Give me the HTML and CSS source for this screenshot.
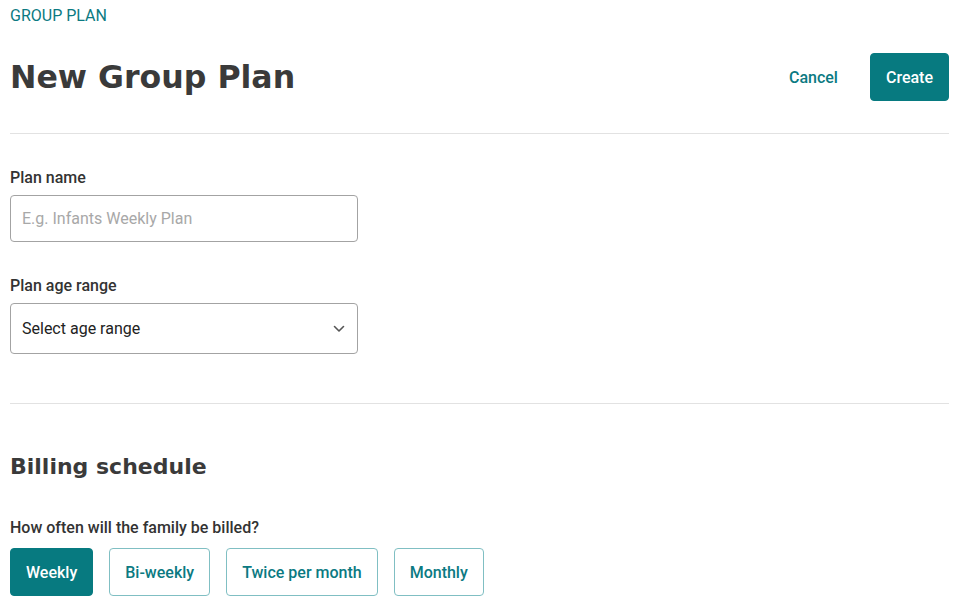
FILE: index.html
```html
<!DOCTYPE html>
<html lang="en">
<head>
<meta charset="utf-8">
<title>New Group Plan</title>
<link rel="stylesheet" href="styles.css">
</head>
<body>
<div class="page">
  <div class="eyebrow">GROUP PLAN</div>
  <div class="header">
    <h1 class="title">New Group Plan</h1>
    <div class="actions">
      <button class="btn btn-link">Cancel</button>
      <button class="btn btn-primary">Create</button>
    </div>
  </div>
  <hr class="divider">
  <div class="field field-first">
    <label class="label">Plan name</label>
    <div class="input"><span class="placeholder">E.g. Infants Weekly Plan</span></div>
  </div>
  <div class="field field-second">
    <label class="label">Plan age range</label>
    <div class="select">
      <span>Select age range</span>
      <svg class="chev" width="12" height="8" viewBox="0 0 12 8"><path d="M1.5 1.5 L6 6 L10.5 1.5" fill="none" stroke="#555" stroke-width="1.6" stroke-linecap="round" stroke-linejoin="round"/></svg>
    </div>
  </div>
  <hr class="divider divider-2">
  <h2 class="section-title">Billing schedule</h2>
  <div class="question">How often will the family be billed?</div>
  <div class="options">
    <button class="btn btn-primary">Weekly</button>
    <button class="btn btn-outline">Bi-weekly</button>
    <button class="btn btn-outline">Twice per month</button>
    <button class="btn btn-outline">Monthly</button>
  </div>
</div>
</body>
</html>
```

FILE: styles.css
```css
* { box-sizing: border-box; }
body {
  margin: 0;
  background: #fff;
  font-family: Roboto, "Liberation Sans", sans-serif;
  color: #333;
}
.page { padding: 0 10px; }
.eyebrow {
  margin-top: 6px;
  font-size: 16px;
  line-height: 20px;
  color: #0b7a82;
}
.header {
  margin-top: 27px;
  height: 48px;
  display: flex;
  align-items: center;
  justify-content: space-between;
}
.title {
  margin: 0;
  font-family: "DejaVu Sans", sans-serif;
  font-weight: 700;
  font-size: 31.6px;
  line-height: 48px;
  color: #3a3a3a;
}
.actions { display: flex; gap: 16px; align-items: center; }
.btn {
  font-family: Roboto, sans-serif;
  font-weight: 500;
  font-size: 16px;
  height: 48px;
  padding: 0 15px;
  border-radius: 4px;
  border: 1px solid transparent;
  background: none;
  cursor: pointer;
}
.btn-link { color: #0b7a82; }
.btn-primary { background: #077a80; color: #fff; border-color: #077a80; }
.btn-outline { background: #fff; color: #0b7a82; border-color: #80bfc3; }
.divider {
  margin: 32px 0 0;
  border: 0;
  border-top: 1px solid #e2e2e2;
}
.divider-2 { margin-top: 49px; }
.field { display: flex; flex-direction: column; width: 348px; }
.field-first { margin-top: 34px; }
.field-second { margin-top: 34px; }
.label {
  font-size: 16px;
  font-weight: 500;
  line-height: 20px;
  color: #333;
  margin-bottom: 7px;
}
.input, .select {
  border: 1px solid #a3a3a3;
  border-radius: 4px;
  padding: 0 11px;
  display: flex;
  align-items: center;
  font-size: 16px;
}
.input { height: 47px; }
.placeholder { color: #a8a8a8; }
.select { height: 51px; justify-content: space-between; color: #222; padding-right: 12px; }
.section-title {
  margin: 47px 0 0;
  font-family: "DejaVu Sans", sans-serif;
  font-weight: 700;
  font-size: 22px;
  line-height: 32px;
  color: #3a3a3a;
}
.question {
  margin-top: 35px;
  font-size: 16px;
  font-weight: 500;
  line-height: 20px;
  color: #333;
}
.options { margin-top: 10px; display: flex; gap: 16px; }
```
